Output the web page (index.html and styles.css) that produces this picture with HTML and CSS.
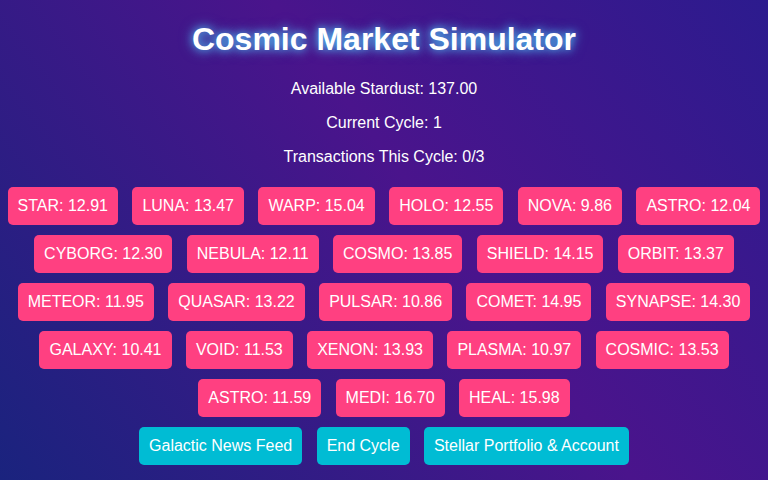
FILE: index.html
```html
<!DOCTYPE html>
<html lang="en">
<head>
<meta charset="utf-8">
<title>Cosmic Market Simulator</title>
<link rel="stylesheet" href="styles.css">
</head>
<body>
<main class="app">
  <h1 class="title">Cosmic Market Simulator</h1>
  <p class="stat">Available Stardust: 137.00</p>
  <p class="stat">Current Cycle: 1</p>
  <p class="stat">Transactions This Cycle: 0/3</p>
  <div class="market">
    <button class="stock">STAR: 12.91</button>
    <button class="stock">LUNA: 13.47</button>
    <button class="stock">WARP: 15.04</button>
    <button class="stock">HOLO: 12.55</button>
    <button class="stock">NOVA: 9.86</button>
    <button class="stock">ASTRO: 12.04</button>
    <button class="stock">CYBORG: 12.30</button>
    <button class="stock">NEBULA: 12.11</button>
    <button class="stock">COSMO: 13.85</button>
    <button class="stock">SHIELD: 14.15</button>
    <button class="stock">ORBIT: 13.37</button>
    <button class="stock">METEOR: 11.95</button>
    <button class="stock">QUASAR: 13.22</button>
    <button class="stock">PULSAR: 10.86</button>
    <button class="stock">COMET: 14.95</button>
    <button class="stock">SYNAPSE: 14.30</button>
    <button class="stock">GALAXY: 10.41</button>
    <button class="stock">VOID: 11.53</button>
    <button class="stock">XENON: 13.93</button>
    <button class="stock">PLASMA: 10.97</button>
    <button class="stock">COSMIC: 13.53</button>
    <button class="stock">ASTRO: 11.59</button>
    <button class="stock">MEDI: 16.70</button>
    <button class="stock">HEAL: 15.98</button>
  </div>
  <div class="actions">
    <button class="action">Galactic News Feed</button>
    <button class="action">End Cycle</button>
    <button class="action">Stellar Portfolio &amp; Account</button>
  </div>
</main>
</body>
</html>
```
FILE: styles.css
```css
html, body {
  margin: 0;
  padding: 0;
  height: 100%;
}
body {
  background: linear-gradient(53deg, #1a237e 0%, #4a148c 56%, #2c1b8e 100%);
  color: #ffffff;
  font-family: "Liberation Sans", Arial, sans-serif;
  overflow: hidden;
}
.app {
  display: flex;
  flex-direction: column;
  align-items: center;
  padding-top: 21px;
}
.title {
  margin: 0 0 22px;
  font-size: 32px;
  line-height: 37px;
  font-weight: bold;
  color: #ffffff;
  text-shadow: 0 0 8px #4fc3f7, 0 0 14px rgba(79, 195, 247, 0.6);
}
.stat {
  margin: 0 0 16px;
  font-size: 16px;
  line-height: 18px;
}
.market,
.actions {
  display: flex;
  flex-wrap: wrap;
  justify-content: center;
  column-gap: 14.4px;
  row-gap: 10px;
  width: 100%;
  box-sizing: border-box;
  padding: 0 5px;
}
.market {
  margin-top: 5px;
}
.actions {
  margin-top: 10px;
}
.stock,
.action {
  border: none;
  border-radius: 5px;
  padding: 10px;
  font-family: "Liberation Sans", Arial, sans-serif;
  font-size: 16px;
  line-height: 18px;
  color: #ffffff;
  cursor: pointer;
}
.stock {
  background: #ff4081;
}
.action {
  background: #00bcd4;
}
```
